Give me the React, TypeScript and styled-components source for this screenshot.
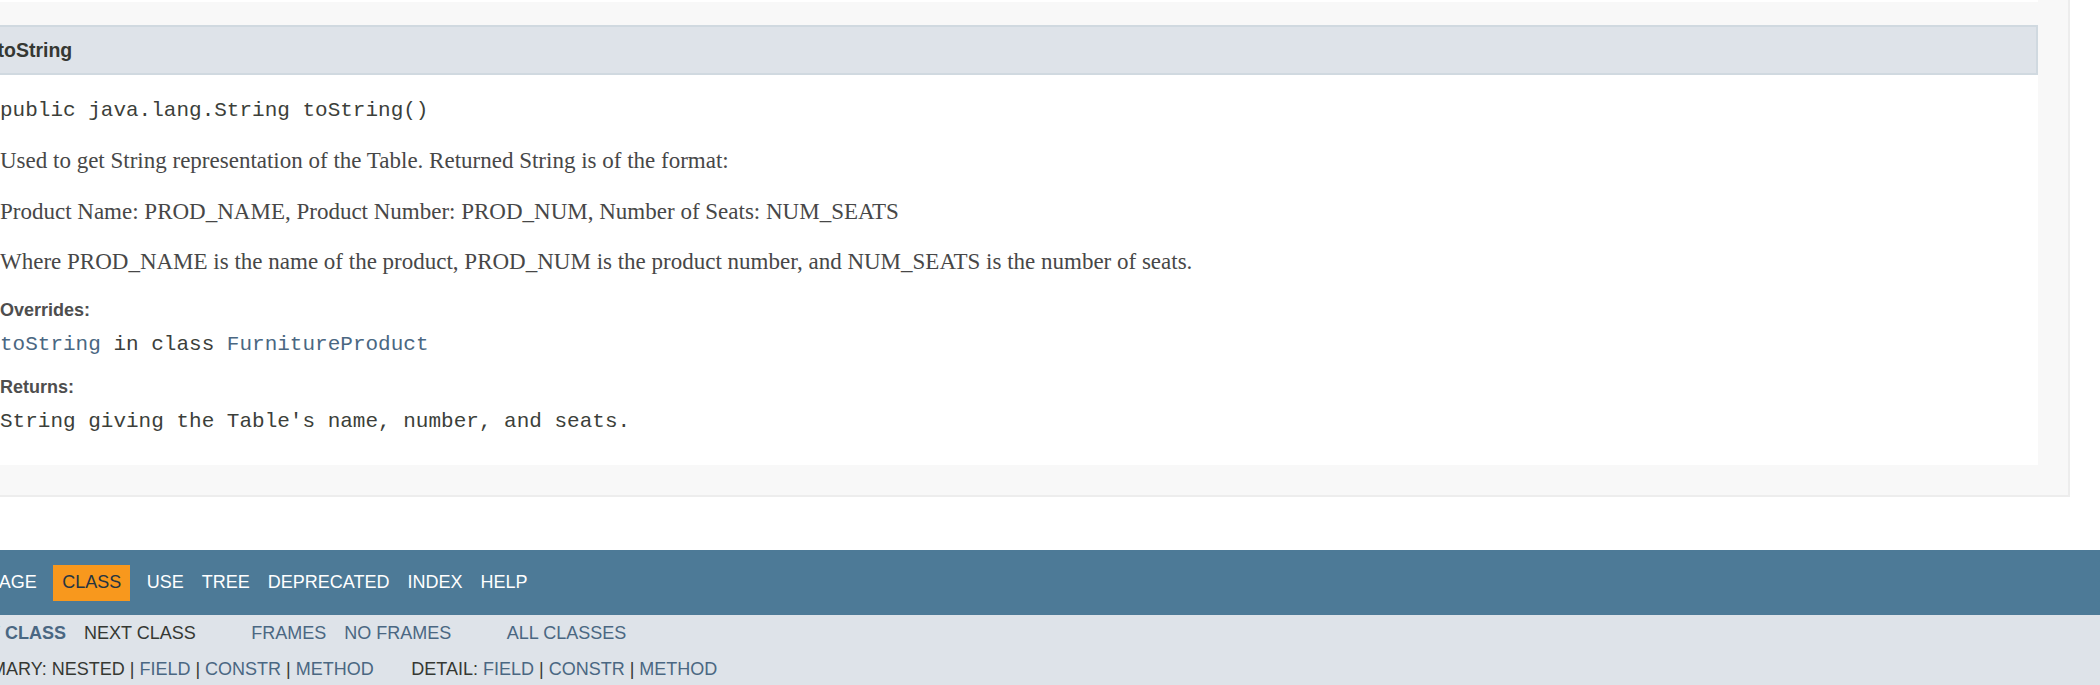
import styled, { createGlobalStyle } from 'styled-components';

// javadoc page, rendered at 150% and scrolled 58px to the right
const GlobalStyle = createGlobalStyle`
  html, body {
    margin: 0;
    padding: 0;
    background: #ffffff;
    overflow: hidden;
  }
  body {
    color: #353833;
    font-family: 'Liberation Sans', Arial, Helvetica, sans-serif;
    font-size: 21px;
  }
  a {
    text-decoration: none;
    color: #4a6782;
  }
`;

const Page = styled.div`
  margin-left: -58px;
  width: calc(100% + 58px);
`;

const ContentContainer = styled.div`
  padding: 0 30px 52.5px;
`;

const DetailSection = styled.section`
  background: #f8f8f8;
  border: 2px solid #ededed;
  border-top: none;
  padding: 0 30px 30px 14px;
`;

const PrevMethodTail = styled.div`
  height: 2px;
  margin-bottom: 23px;
  background: #ffffff;
`;

const MethodBlock = styled.div`
  background: #ffffff;
  padding: 0 0 7.5px 12px;
  line-height: 1.4;
`;

const MethodName = styled.h4`
  margin: 0 0 9px -12px;
  padding: 10.5px 7.5px;
  border: 2px solid #d0d9e0;
  background: #dee3e9;
  font-size: 19.5px;
  font-weight: bold;
  line-height: 25px;
  color: #353833;
`;

const Signature = styled.pre`
  margin: 21px 0;
  font-family: 'Liberation Mono', 'Courier New', monospace;
  font-size: 21px;
  line-height: 29.4px;
  color: #3c3f3a;
`;

const Block = styled.div`
  margin: 4.5px 15px 3px 0;
  color: #474747;
  font-family: 'Liberation Serif', Georgia, 'Times New Roman', serif;
  font-size: 23px;
`;

const Para = styled.p`
  margin: 21px 0;
  line-height: 29.4px;
`;

const TagList = styled.dl`
  margin: 21px 0;
`;

const TagName = styled.dt`
  margin: 15px 0 0;
  font-size: 18px;
  font-weight: bold;
  line-height: 25.2px;
  color: #4e4e4e;
`;

const TagValue = styled.dd`
  margin: 7.5px 0 15px;
  font-family: 'Liberation Mono', 'Courier New', monospace;
  font-size: 21px;
  line-height: 29.4px;
  color: #3c3f3a;
  white-space: pre;
`;

const BottomNav = styled.nav`
  background: #4d7a97;
  color: #ffffff;
  height: 50.4px;
  padding-top: 15px;
  overflow: hidden;
  font-size: 18px;
`;

const NavList = styled.ul`
  display: flex;
  margin: 0 37.5px 0 0;
  padding: 0;
  list-style: none;
`;

const NavItem = styled.li<{ $current?: boolean }>`
  padding: 7.5px 9px;
  text-transform: uppercase;
  white-space: nowrap;
  ${(p) =>
    p.$current &&
    `
    margin: 0 7.5px;
    background: #f8981d;
    color: #253441;
  `}
`;

const TopNavLink = styled.a`
  && {
    color: #ffffff;
  }
`;

const SubNav = styled.div`
  background: #dee3e9;
  font-size: 18px;
  padding-bottom: 10px;
`;

const SubNavRow = styled.div`
  display: flex;
`;

const SummaryRow = styled.div`
  display: flex;
  margin-top: 7.5px;
  padding: 0 0 7.5px 9px;
  text-transform: uppercase;
`;

const SubNavList = styled.ul`
  display: flex;
  margin: 0 37.5px 0 0;
  padding: 0;
  list-style: none;
  white-space: pre;
`;

const TypeNameLink = styled.span`
  font-weight: bold;
`;

const topLinks = ['Package', 'Class', 'Use', 'Tree', 'Deprecated', 'Index', 'Help'];

export default function App() {
  return (
    <>
      <GlobalStyle />
      <Page>
        <ContentContainer>
          <DetailSection>
            <PrevMethodTail />
            <MethodBlock>
              <MethodName>toString</MethodName>
              <Signature>public&nbsp;java.lang.String&nbsp;toString()</Signature>
              <Block>
                <Para>Used to get String representation of the Table. Returned String is of the format:</Para>
                <Para>Product Name: PROD_NAME, Product Number: PROD_NUM, Number of Seats: NUM_SEATS</Para>
                <Para>
                  Where PROD_NAME is the name of the product, PROD_NUM is the product number, and NUM_SEATS is the
                  number of seats.
                </Para>
              </Block>
              <TagList>
                <TagName>Overrides:</TagName>
                <TagValue>
                  <a href="#">toString</a>
                  {' in class '}
                  <a href="#">FurnitureProduct</a>
                </TagValue>
                <TagName>Returns:</TagName>
                <TagValue>String giving the Table's name, number, and seats.</TagValue>
              </TagList>
            </MethodBlock>
          </DetailSection>
        </ContentContainer>

        <BottomNav>
          <NavList>
            {topLinks.map((l) => (
              <NavItem key={l} $current={l === 'Class'}>
                {l === 'Class' || l === 'Deprecated' ? l : <TopNavLink href="#">{l}</TopNavLink>}
              </NavItem>
            ))}
          </NavList>
        </BottomNav>

        <SubNav>
          <SubNavRow>
            <NavList>
              <NavItem>
                <a href="#">
                  <TypeNameLink>Prev Class</TypeNameLink>
                </a>
              </NavItem>
              <NavItem>Next Class</NavItem>
            </NavList>
            <NavList>
              <NavItem>
                <a href="#">Frames</a>
              </NavItem>
              <NavItem>
                <a href="#">No Frames</a>
              </NavItem>
            </NavList>
            <NavList>
              <NavItem>
                <a href="#">All Classes</a>
              </NavItem>
            </NavList>
          </SubNavRow>
          <SummaryRow>
            <SubNavList>
              <li>{'Summary: '}</li>
              <li>{'Nested | '}</li>
              <li>
                <a href="#">Field</a>
                {' | '}
              </li>
              <li>
                <a href="#">Constr</a>
                {' | '}
              </li>
              <li>
                <a href="#">Method</a>
              </li>
            </SubNavList>
            <SubNavList>
              <li>{'Detail: '}</li>
              <li>
                <a href="#">Field</a>
                {' | '}
              </li>
              <li>
                <a href="#">Constr</a>
                {' | '}
              </li>
              <li>
                <a href="#">Method</a>
              </li>
            </SubNavList>
          </SummaryRow>
        </SubNav>
      </Page>
    </>
  );
}
